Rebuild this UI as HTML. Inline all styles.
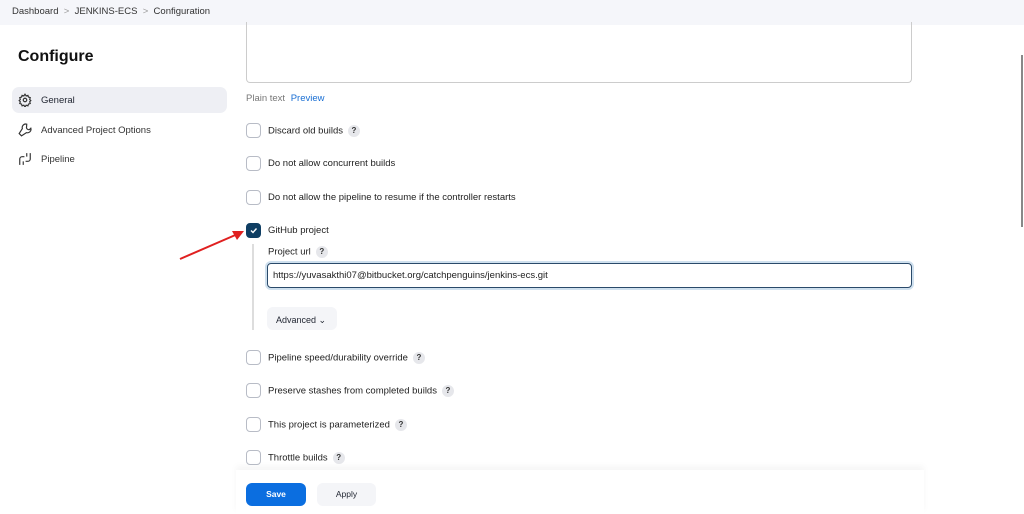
<!DOCTYPE html><html><head><style>
*{margin:0;padding:0;box-sizing:border-box}
body{width:1024px;height:514px;overflow:hidden;background:#fff;font-family:"Liberation Sans",sans-serif;color:#1f2430;position:relative;font-size:9.5px}
.a{position:absolute}
.cb{position:absolute;left:246px;width:15px;height:15px;border:1.3px solid #b8bcc6;border-radius:4px;background:#fff}
.lb{position:absolute;left:268px;font-size:9.5px;color:#222}
.q{display:inline-block;width:12px;height:12px;border-radius:50%;background:#e6e7eb;font-size:8px;font-weight:bold;text-align:center;line-height:12px;margin-left:5px;vertical-align:middle;color:#333}
</style></head><body>
<div class="a" style="left:0;top:0;width:1024px;height:25px;background:#f5f6fa"></div>
<div class="a" style="left:12px;top:6px;font-size:9.5px;color:#333">Dashboard &nbsp;<span style="color:#999">&gt;</span>&nbsp; JENKINS-ECS &nbsp;<span style="color:#999">&gt;</span>&nbsp; Configuration</div>
<div class="a" style="left:18px;top:48px;font-size:16px;font-weight:bold;color:#111">Configure</div>
<div class="a" style="left:12px;top:87px;width:215px;height:26px;background:#eeeff4;border-radius:7px"></div>
<svg class="a" style="left:18px;top:93px" width="14" height="14" viewBox="0 0 24 24" fill="none" stroke="#333" stroke-width="2"><circle cx="12" cy="12" r="3"/><path d="M12 2l2 3 3-1 1 3 3 1-1 3 2 2-2 2 1 3-3 1-1 3-3-1-2 3-2-3-3 1-1-3-3-1 1-3-2-2 2-2-1-3 3-1 1-3 3 1z"/></svg>
<div class="a" style="left:41px;top:95px;font-size:9.5px">General</div>
<svg class="a" style="left:18px;top:123px" width="14" height="14" viewBox="0 0 24 24" fill="none" stroke="#333" stroke-width="2"><path d="M14.7 6.3a4 4 0 0 0 5 5L22 9a6 6 0 0 1-7.5 7.5L6 22l-4-4 5.5-8.5A6 6 0 0 1 15 2z"/></svg>
<div class="a" style="left:41px;top:125px;font-size:9.5px;color:#333">Advanced Project Options</div>
<svg class="a" style="left:18px;top:152px" width="14" height="14" viewBox="0 0 24 24" fill="none" stroke="#333" stroke-width="2"><path d="M3 22V12a4 4 0 0 1 4-4h4M21 2v10a4 4 0 0 1-4 4h-4M9 22v-6M15 2v6"/></svg>
<div class="a" style="left:41px;top:154px;font-size:9.5px;color:#333">Pipeline</div>
<div class="a" style="left:246px;top:22px;width:666px;height:61px;border:1px solid #ccc;border-top:none;border-radius:0 0 4px 4px"></div>
<div class="a" style="left:246px;top:93px;color:#777">Plain text <span style="color:#1a6fd4;margin-left:3px">Preview</span></div>
<div class="cb" style="top:123px"></div><div class="lb" style="top:125px">Discard old builds<span class="q">?</span></div>
<div class="cb" style="top:156px"></div><div class="lb" style="top:158px">Do not allow concurrent builds</div>
<div class="cb" style="top:190px"></div><div class="lb" style="top:192px">Do not allow the pipeline to resume if the controller restarts</div>
<div class="cb" style="top:223px;background:#0f3e63;border-color:#0f3e63"><svg width="13" height="13" viewBox="0 0 13 13" style="position:absolute;left:0;top:0"><path d="M4 6.5l2 2 3.5-4" stroke="#fff" stroke-width="1.4" fill="none"/></svg></div>
<div class="lb" style="top:225px">GitHub project</div>
<div class="a" style="left:252px;top:244px;width:2px;height:86px;background:#ddd"></div>
<div class="lb" style="top:246px">Project url<span class="q">?</span></div>
<div class="a" style="left:267px;top:263px;width:645px;height:25px;border:1.5px solid #2a4a6a;border-radius:4px;box-shadow:0 0 0 2px #cfe0ee"></div>
<div class="lb" style="top:270px;left:273px">https://yuvasakthi07@bitbucket.org/catchpenguins/jenkins-ecs.git</div>
<div class="a" style="left:267px;top:307px;width:70px;height:23px;background:#f4f5f8;border-radius:6px;font-size:9px;padding:8px 0 0 9px">Advanced &#8964;</div>
<div class="cb" style="top:350px"></div><div class="lb" style="top:352px">Pipeline speed/durability override<span class="q">?</span></div>
<div class="cb" style="top:383px"></div><div class="lb" style="top:385px">Preserve stashes from completed builds<span class="q">?</span></div>
<div class="cb" style="top:417px"></div><div class="lb" style="top:419px">This project is parameterized<span class="q">?</span></div>
<div class="cb" style="top:450px"></div><div class="lb" style="top:452px">Throttle builds<span class="q">?</span></div>
<div class="a" style="left:236px;top:470px;width:688px;height:44px;background:#fff;box-shadow:0 -4px 6px rgba(0,0,0,0.04)"></div>
<div class="a" style="left:246px;top:483px;width:60px;height:23px;background:#0b6ee0;border-radius:6px;color:#fff;font-weight:bold;font-size:8.5px;text-align:center;line-height:23px">Save</div>
<div class="a" style="left:317px;top:483px;width:59px;height:23px;background:#f4f5f8;border-radius:6px;font-size:8.5px;text-align:center;line-height:23px">Apply</div>
<svg class="a" style="left:178px;top:226px" width="70" height="36"><path d="M2 33L62 7" stroke="#e02020" stroke-width="2"/><path d="M66 5l-12 0 5 9z" fill="#e02020"/></svg>
<div class="a" style="left:1021px;top:55px;width:2px;height:172px;background:#888"></div>
</body></html>
